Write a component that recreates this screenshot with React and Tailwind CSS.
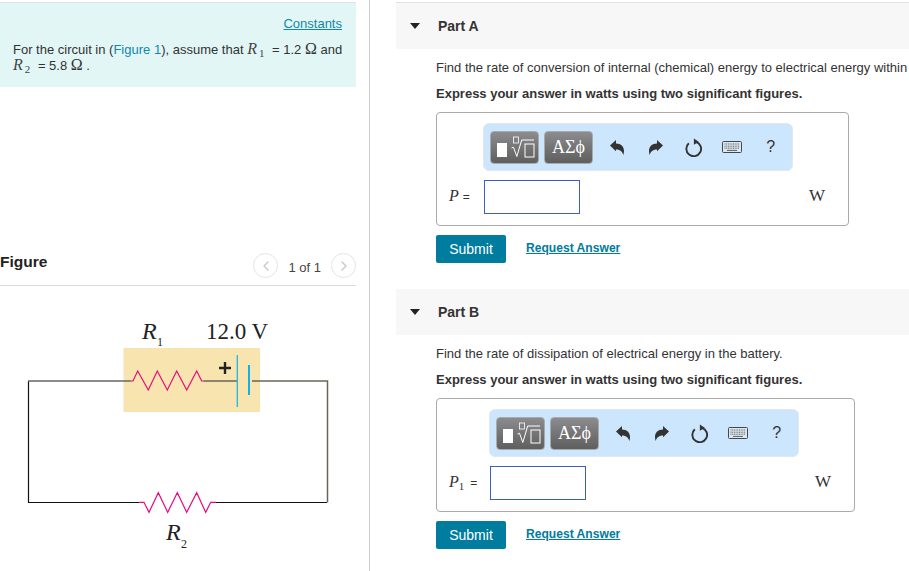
import { ChevronLeft, ChevronRight } from 'lucide-react';

const SERIF = 'font-["Liberation_Serif",serif]';

function MathButton() {
  return (
    <div className="w-[49px] h-[33px] rounded-[4px] border border-[#aaa] bg-gradient-to-b from-[#8c8c8f] to-[#5f5f5f]">
      <svg width="47" height="31" viewBox="1 1 47 31" fill="none" stroke="#fff">
        <rect x="7" y="12" width="10" height="14" fill="#fff" stroke="none" />
        <rect x="23.5" y="6" width="5" height="6" strokeWidth="0.8" />
        <path d="M21.5 17l2-.8 3.3 9.3L31.7 9H44" strokeWidth="1" />
        <rect x="35" y="13" width="9" height="13" strokeWidth="1" />
      </svg>
    </div>
  );
}

function ArrowIcon({ flip }) {
  return (
    <svg width="14" height="15" viewBox="0 0 14 15" className={flip ? '-scale-x-100' : ''}>
      <path d="M0 5.500L6 0v3.500c5 0 8 3 8 7.500 0 1.300-.3 3-.8 4-.4-3-2.700-5.500-7.200-5.500v1.800z" fill="#333" />
    </svg>
  );
}

function KeyboardIcon() {
  return (
    <svg width="20" height="12" viewBox="0 0 20 12">
      <rect x="0.5" y="0.5" width="19" height="11" rx="1" fill="#dfe7ec" stroke="#3c4852" />
      <path d="M2.500 3h15M2.500 5.200h15M2.500 7.200h15" stroke="#55606a" strokeWidth="1" strokeDasharray="1 .7" />
      <path d="M5 9.400h10" stroke="#55606a" strokeWidth="1" />
    </svg>
  );
}

function ReloadIcon() {
  return (
    <svg width="18" height="19" viewBox="0 0 17 18" fill="none">
      <path d="M10.400 3.600A7 7 0 1 1 3.600 5" stroke="#333" strokeWidth="1.800" />
      <path d="M8.400.4l4.600 3.200-4.600 2.800z" fill="#333" />
    </svg>
  );
}

function Toolbar() {
  const slot = 'w-[38.4px] flex justify-center items-center text-[#333]';
  return (
    <div className="w-[310px] h-[48px] rounded-[6px] bg-[#cbe6fd] border border-[#e2e8ec] pl-[6px] flex items-center">
      <MathButton />
      <div className={`ml-[5px] w-[49px] h-[33px] rounded-[4px] border border-[#aaa] bg-gradient-to-b from-[#8c8c8f] to-[#5f5f5f] text-white text-[18px] leading-[30px] text-center ${SERIF}`}>
        ΑΣϕ
      </div>
      <div className="ml-[5px] flex items-center">
        <div className={slot}><ArrowIcon /></div>
        <div className={slot}><ArrowIcon flip /></div>
        <div className={slot}><ReloadIcon /></div>
        <div className={slot}><KeyboardIcon /></div>
        <div className={`${slot} text-[16px]`}>?</div>
      </div>
    </div>
  );
}

function AnswerBox({ label, width, inputLeft }) {
  return (
    <div className="ml-[40px] h-[114px] rounded-[4px] border border-[#aaa] pt-[10px] flex flex-col" style={{ width }}>
      <div style={{ marginLeft: inputLeft - 1 }}>
        <Toolbar />
      </div>
      <div className="flex items-center mt-[9px]">
        <div className={`pl-[12px] mb-[2px] text-[16px] text-[#333] ${SERIF}`} style={{ width: inputLeft }}>
          {label}
        </div>
        <div className="w-[96px] h-[34px] border border-[#3b5fc9] bg-white" />
        <div className={`ml-auto mr-[23px] mb-[2px] text-[17px] text-[#333] ${SERIF}`}>W</div>
      </div>
    </div>
  );
}

function Part({ name, question, label, width, inputLeft }) {
  return (
    <section>
      <div className="h-[46px] bg-[#f7f7f7] flex items-center pl-[14px]">
        <span className="w-0 h-0 border-x-[5.5px] border-x-transparent border-t-[6px] border-t-[#222]" />
        <h2 className="ml-[18px] text-[14px] font-bold text-[#333]">{name}</h2>
      </div>
      <p className="ml-[40px] mt-[9px] h-[20px] text-[13px] leading-[20px] text-[#333] whitespace-nowrap">{question}</p>
      <p className="ml-[40px] mt-[6px] h-[20px] text-[13px] leading-[20px] font-bold text-[#333] whitespace-nowrap">
        Express your answer in watts using two significant figures.
      </p>
      <div className="mt-[8px]">
        <AnswerBox label={label} width={width} inputLeft={inputLeft} />
      </div>
      <div className="ml-[40px] mt-[9px] flex items-start">
        <button type="button" className="w-[70px] h-[28px] rounded-[2px] bg-[#007c9e] text-white text-[14px]">Submit</button>
        <a href="#" className="ml-[20px] text-[12.1px] leading-[26px] font-bold text-[#007c9e] underline">Request Answer</a>
      </div>
    </section>
  );
}

function Circuit() {
  return (
    <svg width="356" height="285" viewBox="0 286 356 285" fill="none" className="block">
      <rect x="123.5" y="348" width="136.5" height="64" fill="#f7e4ae" />
      <path d="M28.500 381V502.500H139.300M216 502.500H327" stroke="#111" strokeWidth="1.200" />
      <path d="M28 381H131" stroke="#666" strokeWidth="1.600" />
      <path d="M204 381H237M252 381H327.500V502.500" stroke="#6a6558" strokeWidth="1.500" />
      <polyline points="131,381 133,381 137.700,371 148.300,390 157.300,371 167.300,390 176.700,371 186.700,390 196.700,371 201.700,381 204,381" stroke="#ea0a7c" strokeWidth="1.200" />
      <polyline points="139.300,502.300 144,502.300 149,512.300 158.300,492.700 167.700,512.300 177.300,492.700 186.700,512.300 196.700,492.700 205.700,512.300 210.700,502.300 216,502.300" stroke="#ea0a7c" strokeWidth="1.200" />
      <path d="M237.300 355v52" stroke="#14b1e7" strokeWidth="1.200" />
      <path d="M249 365v30" stroke="#14b1e7" strokeWidth="2" />
      <path d="M219 368h12M225 362v12" stroke="#222" strokeWidth="2.400" />
      <g fill="#222" fontFamily="Liberation Serif, serif">
        <text x="142" y="339" fontSize="24" fontStyle="italic">R</text>
        <text x="157" y="346" fontSize="12">1</text>
        <text x="206" y="339" fontSize="23">12.0 V</text>
        <text x="166" y="540" fontSize="24" fontStyle="italic">R</text>
        <text x="181" y="548" fontSize="12">2</text>
      </g>
    </svg>
  );
}

function PageButton({ children }) {
  return (
    <div className="w-[25px] h-[25px] rounded-full border border-[#e4e4e4] flex items-center justify-center text-[#c8c8c8]">
      {children}
    </div>
  );
}

function MathVar({ name, sub }) {
  return (
    <span className={`${SERIF} text-[16px] text-[#444] mr-[4px]`}>
      <i>{name}</i>
      <sub className="text-[11px] ml-[2px]">{sub}</sub>
    </span>
  );
}

export default function App() {
  return (
    <div className='w-[909px] h-[571px] overflow-hidden flex bg-white font-["Liberation_Sans",Arial,sans-serif]'>
      <aside className="w-[370px] shrink-0 border-r border-[#c8d0d6] pt-[2px]">
        <div className="w-[356px] h-[85px] border-t border-[#dde3e6] bg-[#e2f6f6] pt-[12px] pl-[13px] pr-[14px] text-[#333]">
          <div className="text-right text-[13px] leading-[17px]">
            <a href="#" className="text-[#1188aa] underline">Constants</a>
          </div>
          <p className="mt-[9px] text-[13px] leading-[15px] whitespace-nowrap">
            For the circuit in (<span className="text-[#1188aa]">Figure 1</span>), assume that{' '}
            <MathVar name="R" sub="1" /> = 1.2{' '}
            <span className={`${SERIF} text-[16px]`}>Ω</span> and
            <br />
            <MathVar name="R" sub="2" /> = 5.8{' '}
            <span className={`${SERIF} text-[16px]`}>Ω</span> .
          </p>
        </div>
        <div className="w-[356px] mt-[165px] h-[34px] border-b border-[#d8dde0] flex items-start">
          <h2 className="text-[15.500px] leading-[20px] font-bold text-[#222]">Figure</h2>
          <div className="ml-auto mt-[1px] flex items-center">
            <PageButton><ChevronLeft size={16} /></PageButton>
            <span className="mx-[10px] mt-[5px] text-[13px] text-[#444]">1 of 1</span>
            <PageButton><ChevronRight size={16} /></PageButton>
          </div>
        </div>
        <Circuit />
      </aside>
      <main className="flex-1 min-w-0 ml-[26px] pt-[2px]">
        <div className="border-t border-[#e2e2e2]">
          <Part
            name="Part A"
            question="Find the rate of conversion of internal (chemical) energy to electrical energy within"
            label={<span><i>P</i> <span className='text-[12px] font-["Liberation_Sans",sans-serif]'>=</span></span>}
            width={413}
            inputLeft={47}
          />
        </div>
        <div className="mt-[26px]">
          <Part
            name="Part B"
            question="Find the rate of dissipation of electrical energy in the battery."
            label={<span><i>P</i><sub className="text-[11px]">1</sub> <span className='ml-[2px] text-[12px] font-["Liberation_Sans",sans-serif]'>=</span></span>}
            width={419}
            inputLeft={53}
          />
        </div>
      </main>
    </div>
  );
}
